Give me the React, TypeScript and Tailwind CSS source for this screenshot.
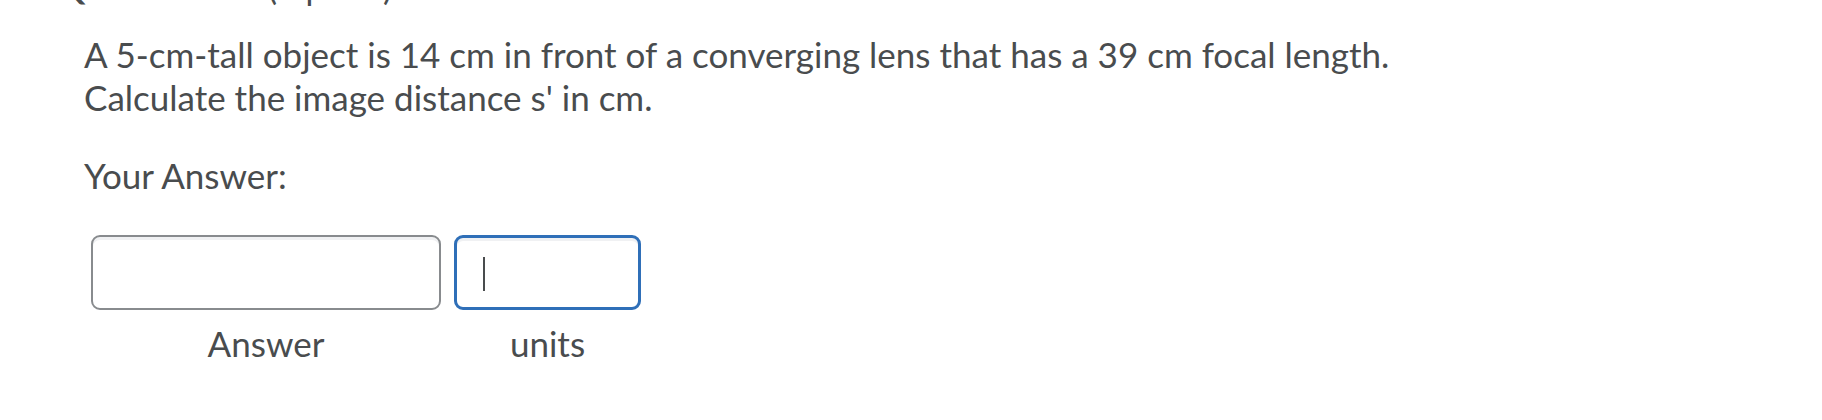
export default function App() {
  return (
    <div className="w-[1822px] h-[420px] overflow-hidden bg-white text-[#494c4e] font-['Lato','Liberation_Sans',sans-serif]">
      {/* quiz heading, scrolled mostly out of view */}
      <div className="-mt-[33px] h-[40px] flex items-baseline text-[34px] leading-[40px] pl-[58px]">
        <span className="w-[210px] font-bold">Question 9</span>
        <span>(1 point)</span>
      </div>

      <div className="pl-[84px] mt-[26px] text-[35px] leading-[43px]">
        <p>
          A 5-cm-tall object is 14 cm in front of a converging lens that has a 39 cm focal length.
          <br />
          Calculate the image distance s' in cm.
        </p>

        <p className="mt-[35px]">Your Answer:</p>

        <div className="mt-[38px] ml-[7px] flex items-start gap-[13px]">
          <div className="flex flex-col items-center">
            <div className="w-[350px] h-[75px] rounded-[9px] border-2 border-[#888b8e] bg-white shadow-[inset_0_3px_0_0_#f0f1f3]" />
            <span className="mt-[12px]">Answer</span>
          </div>
          <div className="flex flex-col items-center">
            <div className="w-[187px] h-[75px] rounded-[9px] border-[3px] border-[#2f6fb8] bg-white shadow-[inset_0_3px_0_0_#f0f1f3] pl-[26px] pt-[19px]">
              <div className="w-[2px] h-[34px] bg-[#494c4e]" />
            </div>
            <span className="mt-[12px]">units</span>
          </div>
        </div>
      </div>
    </div>
  )
}
